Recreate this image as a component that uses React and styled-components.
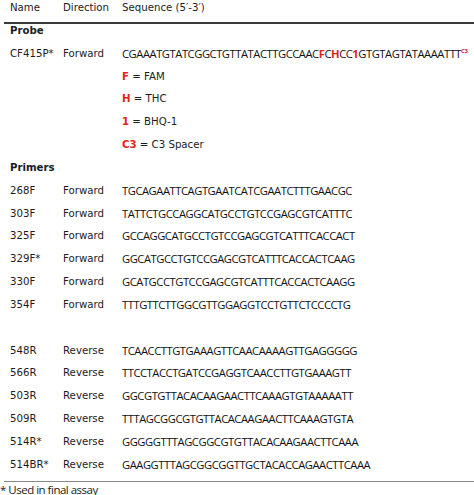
import styled, { createGlobalStyle } from "styled-components";

const GlobalStyle = createGlobalStyle`
  html, body {
    margin: 0;
    padding: 0;
    background: #fff;
    overflow: hidden;
  }
  body {
    width: 474px;
    height: 495px;
  }
`;

const Page = styled.div`
  width: 474px;
  height: 495px;
  overflow: hidden;
  color: #1c1c1c;
  font-family: "DejaVu Sans", Verdana, sans-serif;
  font-size: 10.2px;
`;

const Table = styled.div`
  margin-left: 4px;
`;

const HeaderRow = styled.div`
  display: grid;
  grid-template-columns: 53px 59px 1fr;
  padding-left: 6px;
  height: 24px;
  line-height: 14px;
  padding-top: 1px;
  border-bottom: 2px solid #3a3a3a;
  box-sizing: border-box;
`;

const Row = styled.div`
  display: grid;
  grid-template-columns: 53px 59px 1fr;
  padding-left: 6px;
  height: 22.84px;
  line-height: 14px;
  white-space: nowrap;
  box-sizing: border-box;
`;

const Body = styled.div`
  border-bottom: 1.5px solid #8a8a8a;
`;

const Cell = styled.div`
  white-space: nowrap;
`;

const Section = styled.div`
  font-weight: bold;
  grid-column: 1 / -1;
`;

const Seq = styled.div`
  font-family: "Open Sans", "Liberation Sans", sans-serif;
  font-size: 11.2px;
  letter-spacing: -0.45px;
  white-space: nowrap;
  color: #111;
`;

const Mark = styled.span`
  color: #e3211c;
  font-weight: bold;
`;

const Sup = styled.sup`
  color: #e3211c;
  font-weight: bold;
  font-size: 6px;
  vertical-align: 5px;
  line-height: 0;
`;

const Footer = styled.div`
  font-family: "Open Sans", "Liberation Sans", sans-serif;
  font-size: 11.5px;
  letter-spacing: -0.5px;
  line-height: 14px;
  padding-top: 1px;
`;

const probeLegend = [
  ["F", "FAM"],
  ["H", "THC"],
  ["1", "BHQ-1"],
  ["C3", "C3 Spacer"],
];

const forward = [
  ["268F", "TGCAGAATTCAGTGAATCATCGAATCTTTGAACGC"],
  ["303F", "TATTCTGCCAGGCATGCCTGTCCGAGCGTCATTTC"],
  ["325F", "GCCAGGCATGCCTGTCCGAGCGTCATTTCACCACT"],
  ["329F*", "GGCATGCCTGTCCGAGCGTCATTTCACCACTCAAG"],
  ["330F", "GCATGCCTGTCCGAGCGTCATTTCACCACTCAAGG"],
  ["354F", "TTTGTTCTTGGCGTTGGAGGTCCTGTTCTCCCCTG"],
];

const reverse = [
  ["548R", "TCAACCTTGTGAAAGTTCAACAAAAGTTGAGGGGG"],
  ["566R", "TTCCTACCTGATCCGAGGTCAACCTTGTGAAAGTT"],
  ["503R", "GGCGTGTTACACAAGAACTTCAAAGTGTAAAAATT"],
  ["509R", "TTTAGCGGCGTGTTACACAAGAACTTCAAAGTGTA"],
  ["514R*", "GGGGGTTTAGCGGCGTGTTACACAAGAACTTCAAA"],
  ["514BR*", "GAAGGTTTAGCGGCGGTTGCTACACCAGAACTTCAAA"],
];

function PrimerRow({ name, dir, seq }) {
  return (
    <Row>
      <Cell>{name}</Cell>
      <Cell>{dir}</Cell>
      <Seq>{seq}</Seq>
    </Row>
  );
}

export default function App() {
  return (
    <Page>
      <GlobalStyle />
      <Table>
        <HeaderRow>
          <Cell>Name</Cell>
          <Cell>Direction</Cell>
          <Cell>Sequence (5′-3′)</Cell>
        </HeaderRow>
        <Body>
          <Row>
            <Section>Probe</Section>
          </Row>
          <Row>
            <Cell>CF415P*</Cell>
            <Cell>Forward</Cell>
            <Seq>
              CGAAATGTATCGGCTGTTATACTTGCCAAC<Mark>F</Mark>C<Mark>H</Mark>CC
              <Mark>1</Mark>GTGTAGTATAAAATTT<Sup>C3</Sup>
            </Seq>
          </Row>
          {probeLegend.map(([k, v]) => (
            <Row key={k}>
              <Cell />
              <Cell />
              <Cell>
                <Mark>{k}</Mark> = {v}
              </Cell>
            </Row>
          ))}
          <Row>
            <Section>Primers</Section>
          </Row>
          {forward.map(([n, s]) => (
            <PrimerRow key={n} name={n} dir="Forward" seq={s} />
          ))}
          <Row />
          {reverse.map(([n, s]) => (
            <PrimerRow key={n} name={n} dir="Reverse" seq={s} />
          ))}
        </Body>
      </Table>
      <Footer>* Used in final assay</Footer>
    </Page>
  );
}
